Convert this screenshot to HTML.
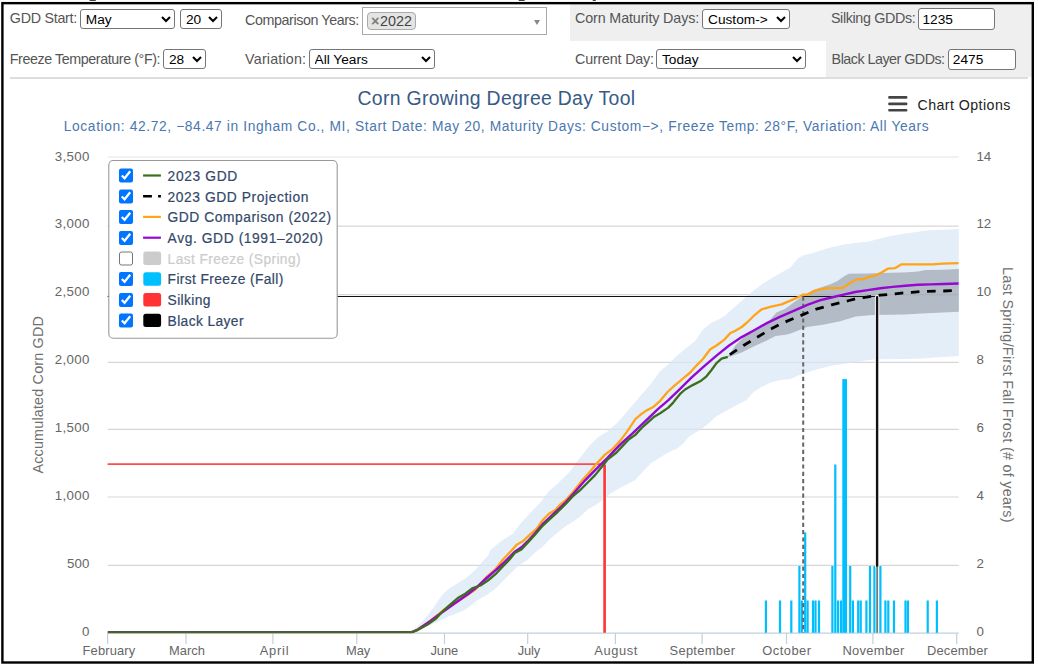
<!DOCTYPE html>
<html><head><meta charset="utf-8"><title>Corn Growing Degree Day Tool</title>
<style>
html,body{margin:0;padding:0;background:#fff;}
body{width:1038px;height:669px;position:relative;overflow:hidden;font-family:'Liberation Sans',sans-serif;}
.gp{position:absolute;background:#efefef;}
.lb{position:absolute;white-space:pre;font-size:14.3px;line-height:16px;color:#555;font-family:'Liberation Sans',sans-serif;}
select,input[type=text]{position:absolute;box-sizing:border-box;margin:0;font-family:'Liberation Sans',sans-serif;color:#000;background:#fff;}
select{font-size:13.7px;padding:0 0 0 1px;border:1px solid #767676;border-radius:3px;}
input[type=text]{font-size:13.7px;padding:1px 4px;border:1px solid #767676;border-radius:3px;}
.cb{position:absolute;left:118.6px;margin:0;width:14.6px;height:14.6px;}
#hr{position:absolute;left:10.4px;top:77.3px;width:1017.2px;height:1.5px;background:#ddd;}
#s2{position:absolute;left:362.3px;top:6.9px;width:184.4px;height:27.8px;box-sizing:border-box;border:1px solid #aaa;background:#fff;}
#tag{position:absolute;left:366.9px;top:12px;width:49.2px;height:18px;box-sizing:border-box;border:1px solid #aaa;border-radius:4px;background:#e4e4e4;font-size:14.4px;line-height:16.5px;color:#444;white-space:pre;padding-left:3.2px;}
#tag b{color:#7c7c7c;font-size:14.4px;font-weight:700;margin-right:0.6px;}
#arr{position:absolute;left:534.2px;top:20.2px;width:0;height:0;border-left:3.7px solid transparent;border-right:3.7px solid transparent;border-top:5.2px solid #888;}
svg{position:absolute;left:0;top:0;}
svg text{font-family:'Liberation Sans',sans-serif;}
</style></head>
<body>
<div class="gp" style="left:569.8px;top:4.3px;width:461.8px;height:36.7px"></div>
<div class="gp" style="left:826px;top:40.9px;width:205.6px;height:35.9px"></div>
<span class="lb" style="left:9.8px;top:10.0px;letter-spacing:-0.269px">GDD Start:</span>
<span class="lb" style="left:9.8px;top:50.5px;letter-spacing:-0.421px">Freeze Temperature (°F):</span>
<span class="lb" style="left:245.1px;top:11.9px;letter-spacing:-0.413px">Comparison Years:</span>
<span class="lb" style="left:245.1px;top:50.5px;letter-spacing:0.184px">Variation:</span>
<span class="lb" style="left:575.0px;top:10.0px;letter-spacing:-0.118px">Corn Maturity Days:</span>
<span class="lb" style="left:575.0px;top:50.5px;letter-spacing:-0.186px">Current Day:</span>
<span class="lb" style="left:830.9px;top:10.0px;letter-spacing:-0.349px">Silking GDDs:</span>
<span class="lb" style="left:831.6px;top:50.5px;letter-spacing:-0.504px">Black Layer GDDs:</span>
<select style="left:79.8px;top:9.2px;width:94.8px;height:19.8px"><option>May</option></select>
<select style="left:179.9px;top:9.2px;width:42.5px;height:19.8px"><option>20</option></select>
<select style="left:163px;top:49.2px;width:42.8px;height:19.9px"><option>28</option></select>
<select style="left:308.6px;top:49.2px;width:126px;height:20.2px"><option>All Years</option></select>
<div id="s2"></div><div id="tag"><b>&#215;</b>2022</div><div id="arr"></div>
<select style="left:702px;top:9.2px;width:87.9px;height:19.9px"><option>Custom-&gt;</option></select>
<select style="left:656px;top:49.2px;width:149.6px;height:20.2px"><option>Today</option></select>
<input type="text" value="1235" style="left:917.5px;top:8.3px;width:77.7px;height:21.7px">
<input type="text" value="2475" style="left:947.8px;top:48.6px;width:68px;height:21.4px">
<div id="hr"></div>
<svg width="1038" height="669" viewBox="0 0 1038 669">
<rect x="2.4" y="3.15" width="1030.4" height="659.35" fill="none" stroke="#000" stroke-width="2.4"/>
<rect x="89.4" y="-1" width="6.6" height="1.8" rx="0.8" fill="#000"/>
<rect x="518.5" y="-1" width="6.4" height="1.8" rx="0.8" fill="#000"/>
<rect x="592.5" y="-1" width="3.5" height="1.8" rx="0.8" fill="#000"/>
<path d="M107.6 565.3H958.7" stroke="#e3e3e3" stroke-width="1.2" fill="none"/>
<path d="M107.6 497.0H958.7" stroke="#e3e3e3" stroke-width="1.2" fill="none"/>
<path d="M107.6 429.3H958.7" stroke="#e3e3e3" stroke-width="1.2" fill="none"/>
<path d="M107.6 362.4H958.7" stroke="#e3e3e3" stroke-width="1.2" fill="none"/>
<path d="M107.6 294.6H958.7" stroke="#e3e3e3" stroke-width="1.2" fill="none"/>
<path d="M107.6 226.2H958.7" stroke="#e3e3e3" stroke-width="1.2" fill="none"/>
<path d="M107.6 157.0H958.7" stroke="#e3e3e3" stroke-width="1.2" fill="none"/>
<polygon points="411.3,632.3 423.8,620.1 432.6,608.8 442.7,594.3 449.0,588.7 457.8,583.0 467.8,576.7 475.4,569.8 482.9,561.0 487.9,556.0 490.5,550.1 502.6,540.1 512.6,533.8 521.4,522.5 530.2,513.1 540.3,502.4 549.0,491.1 557.8,483.5 565.4,476.0 570.0,471.4 580.1,457.6 590.1,445.0 597.6,437.5 607.7,431.2 617.7,422.4 625.3,413.6 632.8,404.8 640.4,396.0 650.0,385.0 660.0,371.3 667.5,365.0 675.1,357.5 685.1,348.7 695.2,341.1 702.7,329.8 710.3,323.5 718.5,319.6 725.3,315.5 732.6,308.8 742.6,300.0 752.7,291.2 762.7,283.7 772.8,277.4 782.8,271.8 790.4,267.4 797.9,258.6 802.9,255.4 813.0,252.9 823.0,249.8 831.5,247.3 842.6,244.8 855.1,243.0 867.7,241.7 880.3,238.6 892.8,235.4 905.4,233.5 917.9,231.7 925.5,230.4 943.1,229.8 958.8,229.1 958.8,355.9 938.0,357.2 921.5,358.4 905.1,358.9 875.5,359.2 864.0,360.8 847.5,363.3 831.1,365.8 814.7,369.9 799.9,374.8 790.0,379.2 780.6,380.1 770.6,382.6 760.5,387.6 753.0,392.6 746.7,400.0 736.0,405.4 726.0,411.0 715.9,416.7 708.0,424.0 700.4,430.0 695.6,432.4 689.3,436.2 683.1,443.7 676.8,448.8 668.0,452.5 657.9,458.8 650.4,463.8 642.9,471.4 635.3,480.0 620.0,487.9 610.6,493.6 603.1,499.9 595.5,504.9 588.0,509.3 580.5,516.2 572.9,521.9 565.4,526.3 557.8,532.5 550.3,538.8 542.8,546.4 535.2,552.6 526.6,560.5 518.1,566.1 511.8,572.3 503.0,581.1 495.5,588.7 486.7,594.9 477.9,600.0 471.6,605.0 465.3,609.4 459.0,612.5 449.0,616.3 436.4,622.6 423.8,627.6 411.3,632.3" fill="#e4eef9"/>
<polygon points="727.8,356.6 735.4,345.5 741.7,339.2 748.0,333.6 754.2,330.0 760.5,326.3 766.8,322.8 769.3,321.0 772.0,317.5 776.5,312.6 785.3,308.8 795.4,301.3 805.4,294.4 813.0,290.0 820.5,287.5 830.3,284.3 837.5,281.0 843.8,276.5 848.8,273.7 867.7,273.5 880.3,273.1 892.8,272.7 907.9,272.2 917.9,271.5 925.5,270.0 943.1,269.7 958.8,269.0 958.8,311.8 938.0,312.8 921.5,313.5 905.1,314.5 888.7,314.8 872.2,315.1 855.8,316.4 839.3,321.4 822.9,324.7 807.0,327.0 790.0,333.7 785.6,334.8 775.6,336.1 766.8,340.5 754.2,346.2 741.7,352.4 730.4,356.4 727.8,357.0" fill="#b3bbc6"/>
<path d="M107.6 565.3H958.7" stroke="#000" stroke-opacity="0.05" stroke-width="1.2" fill="none"/>
<path d="M107.6 497.0H958.7" stroke="#000" stroke-opacity="0.05" stroke-width="1.2" fill="none"/>
<path d="M107.6 429.3H958.7" stroke="#000" stroke-opacity="0.05" stroke-width="1.2" fill="none"/>
<path d="M107.6 362.4H958.7" stroke="#000" stroke-opacity="0.05" stroke-width="1.2" fill="none"/>
<path d="M107.6 294.6H958.7" stroke="#000" stroke-opacity="0.05" stroke-width="1.2" fill="none"/>
<path d="M107.6 226.2H958.7" stroke="#000" stroke-opacity="0.05" stroke-width="1.2" fill="none"/>
<path d="M107.6 633.1H958.7" stroke="#c0d0e0" stroke-width="1.2"/>
<path d="M107.6 633V644" stroke="#c0d0e0" stroke-width="1.2"/>
<path d="M186.0 633V644" stroke="#c0d0e0" stroke-width="1.2"/>
<path d="M272.9 633V644" stroke="#c0d0e0" stroke-width="1.2"/>
<path d="M356.8 633V644" stroke="#c0d0e0" stroke-width="1.2"/>
<path d="M444.5 633V644" stroke="#c0d0e0" stroke-width="1.2"/>
<path d="M527.7 633V644" stroke="#c0d0e0" stroke-width="1.2"/>
<path d="M615.4 633V644" stroke="#c0d0e0" stroke-width="1.2"/>
<path d="M702.1 633V644" stroke="#c0d0e0" stroke-width="1.2"/>
<path d="M786.5 633V644" stroke="#c0d0e0" stroke-width="1.2"/>
<path d="M872.9 633V644" stroke="#c0d0e0" stroke-width="1.2"/>
<path d="M956.7 633V644" stroke="#c0d0e0" stroke-width="1.2"/>
<rect x="764.8" y="600.5" width="2.2" height="32.3" fill="#00bfff"/>
<rect x="778.9" y="600.5" width="2.2" height="32.3" fill="#00bfff"/>
<rect x="790.2" y="600.5" width="2.2" height="32.3" fill="#00bfff"/>
<rect x="798.3" y="566.0" width="2.2" height="66.8" fill="#00bfff"/>
<rect x="800.7" y="600.5" width="2.2" height="32.3" fill="#00bfff"/>
<rect x="804.1" y="532.4" width="2.2" height="100.4" fill="#00bfff"/>
<rect x="806.5" y="600.5" width="2.2" height="32.3" fill="#00bfff"/>
<rect x="811.9" y="600.5" width="2.2" height="32.3" fill="#00bfff"/>
<rect x="814.4" y="600.5" width="2.2" height="32.3" fill="#00bfff"/>
<rect x="817.9" y="600.5" width="2.2" height="32.3" fill="#00bfff"/>
<rect x="831.3" y="566.0" width="2.2" height="66.8" fill="#00bfff"/>
<rect x="834.2" y="464.5" width="2.2" height="168.3" fill="#00bfff"/>
<rect x="836.9" y="600.5" width="2.2" height="32.3" fill="#00bfff"/>
<rect x="839.9" y="600.5" width="2.2" height="32.3" fill="#00bfff"/>
<rect x="849.1" y="566.0" width="2.2" height="66.8" fill="#00bfff"/>
<rect x="851.8" y="600.5" width="2.2" height="32.3" fill="#00bfff"/>
<rect x="857.1" y="600.5" width="2.2" height="32.3" fill="#00bfff"/>
<rect x="859.6" y="600.5" width="2.2" height="32.3" fill="#00bfff"/>
<rect x="865.3" y="600.5" width="2.2" height="32.3" fill="#00bfff"/>
<rect x="868.9" y="566.0" width="2.2" height="66.8" fill="#00bfff"/>
<rect x="873.3" y="566.0" width="2.2" height="66.8" fill="#00bfff"/>
<rect x="879.3" y="566.0" width="2.2" height="66.8" fill="#00bfff"/>
<rect x="884.3" y="600.5" width="2.2" height="32.3" fill="#00bfff"/>
<rect x="887.2" y="600.5" width="2.2" height="32.3" fill="#00bfff"/>
<rect x="892.9" y="600.5" width="2.2" height="32.3" fill="#00bfff"/>
<rect x="904.4" y="600.5" width="2.2" height="32.3" fill="#00bfff"/>
<rect x="906.8" y="600.5" width="2.2" height="32.3" fill="#00bfff"/>
<rect x="926.6" y="600.5" width="2.2" height="32.3" fill="#00bfff"/>
<rect x="935.8" y="600.5" width="2.2" height="32.3" fill="#00bfff"/>
<rect x="842.3" y="379.1" width="4.7" height="253.7" fill="#00bfff"/>
<path d="M107.6 464.2H604.6" stroke="#ff4a4a" stroke-width="1.7" fill="none"/>
<path d="M604.6 464.6V632.8" stroke="#fff" stroke-opacity="0.6" stroke-width="4.2" fill="none"/>
<path d="M604.6 464.6V632.8" stroke="#ff3838" stroke-width="2.7" fill="none"/>
<path d="M107.6 296.5H877.1" stroke="#111" stroke-width="1.15" fill="none"/>
<path d="M877.1 297.3V566" stroke="#fff" stroke-width="4.4" fill="none" stroke-linecap="round"/>
<path d="M877.1 297.1V566" stroke="#111" stroke-width="2.4" fill="none" stroke-linecap="round"/>
<path d="M877.1 566V632.8" stroke="#555" stroke-width="1.4" fill="none"/>
<path d="M803.2 296.5V632.8" stroke="#666" stroke-width="2" stroke-dasharray="4.2 3.1" fill="none"/>
<clipPath id="pc"><rect x="107.6" y="150" width="851.1" height="483.2"/></clipPath><g clip-path="url(#pc)">
<polyline points="107.6,632.3 411.3,632.3 418.0,629.3 430.1,621.0 443.9,609.8 455.3,603.1 467.8,594.8 475.4,589.6 486.7,576.8 495.5,569.2 502.6,560.0 510.1,552.0 516.4,545.1 522.7,541.3 530.2,534.4 536.5,528.8 542.8,520.0 549.0,513.7 555.3,509.9 560.4,504.3 565.4,500.5 572.9,492.3 581.2,481.6 590.1,471.4 597.6,462.6 605.2,454.4 612.7,448.8 620.3,440.6 626.5,432.4 631.6,424.9 635.3,419.2 640.4,414.8 646.6,410.4 652.9,407.3 660.2,400.8 667.5,392.0 675.1,385.1 682.6,378.8 690.2,372.5 696.4,365.6 702.7,359.3 710.3,349.3 716.5,345.5 724.1,339.9 730.4,333.0 735.8,330.6 741.7,327.0 746.5,323.0 753.4,316.2 761.5,309.4 770.3,306.9 781.6,304.4 790.4,300.6 800.4,296.3 802.9,294.7 807.9,294.4 815.5,290.6 820.5,289.3 828.0,288.1 835.6,288.1 842.8,288.1 848.8,283.8 856.4,279.4 862.7,279.4 868.9,276.9 875.2,275.6 881.5,272.5 887.8,268.7 895.3,268.1 901.6,264.3 917.9,264.3 933.0,264.3 943.1,263.7 958.8,263.1" stroke="#ffa319" stroke-width="2.3" fill="none" stroke-linejoin="round"/>
<polyline points="107.6,632.3 411.3,632.3 418.0,629.5 430.1,621.3 442.7,611.9 455.3,603.1 467.8,594.3 477.9,586.2 486.7,578.0 495.5,570.4 503.0,563.5 510.5,556.0 515.1,551.4 521.4,547.3 527.7,541.2 535.2,533.0 542.8,524.0 550.3,517.0 557.8,510.0 565.4,502.6 572.9,494.3 580.5,485.5 585.1,480.3 595.1,470.1 607.7,457.6 620.3,444.4 632.8,433.1 645.4,421.1 657.9,409.2 668.4,400.2 678.8,390.1 691.4,377.6 704.0,366.3 716.5,355.6 729.1,345.5 741.7,337.1 754.2,330.2 766.8,323.1 779.3,317.2 795.4,310.1 807.9,304.6 820.5,300.2 831.5,297.5 842.6,294.8 855.1,292.0 867.7,290.1 880.3,288.2 892.8,286.9 905.4,285.7 917.9,284.8 930.5,284.4 943.1,284.0 958.8,283.5" stroke="#9608d0" stroke-width="2.4" fill="none" stroke-linejoin="round"/>
<polyline points="107.6,632.3 411.3,632.3 417.6,630.1 427.6,624.5 436.4,618.2 442.7,611.3 449.0,605.6 457.8,598.1 465.3,593.7 472.8,588.0 480.4,585.5 487.9,580.5 495.5,574.2 503.0,566.1 509.3,559.8 515.1,552.6 521.4,549.5 527.7,542.6 535.2,534.4 542.8,525.6 550.3,518.7 557.8,511.8 565.4,504.3 572.9,496.1 580.5,489.8 588.0,482.3 595.1,475.1 602.7,465.7 607.7,459.4 616.5,452.5 624.0,444.4 629.0,439.3 635.3,434.9 641.6,428.0 647.9,422.4 654.2,416.7 660.5,413.0 668.0,407.9 673.0,402.9 675.1,400.0 680.1,393.9 685.1,389.5 692.7,385.1 700.2,381.3 706.5,376.3 711.5,370.0 716.5,363.1 721.6,358.7 727.8,356.8" stroke="#3d6e1e" stroke-width="2.3" fill="none" stroke-linejoin="round"/>
<polyline points="729.8,354.7 743.5,345.5 758.0,336.7 771.8,328.6 779.0,324.7 786.6,321.4 794.1,318.2 801.7,315.1 809.2,312.0 816.1,309.2 824.3,306.9 831.6,304.8 838.4,303.2 847.3,301.0 855.1,298.9 863.3,297.6 871.5,296.4 880.3,295.1 887.8,294.5 895.3,293.8 903.5,292.8 911.7,292.3 919.8,291.7 927.4,291.3 935.5,291.1 943.7,291.0 951.9,290.7 958.8,290.5" stroke="#000" stroke-width="2.8" fill="none" stroke-dasharray="8.6 7.6" stroke-linejoin="round"/>
</g>
<text x="89.4" y="635.8" font-size="13.3" fill="#666" text-anchor="end">0</text>
<text x="89.4" y="567.9" font-size="13.3" fill="#666" text-anchor="end" textLength="22.5" lengthAdjust="spacing">500</text>
<text x="89.4" y="500.0" font-size="13.3" fill="#666" text-anchor="end" textLength="34.7" lengthAdjust="spacing">1,000</text>
<text x="89.4" y="432.1" font-size="13.3" fill="#666" text-anchor="end" textLength="34.7" lengthAdjust="spacing">1,500</text>
<text x="89.4" y="364.2" font-size="13.3" fill="#666" text-anchor="end" textLength="34.7" lengthAdjust="spacing">2,000</text>
<text x="89.4" y="296.3" font-size="13.3" fill="#666" text-anchor="end" textLength="34.7" lengthAdjust="spacing">2,500</text>
<text x="89.4" y="228.4" font-size="13.3" fill="#666" text-anchor="end" textLength="34.7" lengthAdjust="spacing">3,000</text>
<text x="89.4" y="160.5" font-size="13.3" fill="#666" text-anchor="end" textLength="34.7" lengthAdjust="spacing">3,500</text>
<text x="976.4" y="635.8" font-size="13.3" fill="#666" text-anchor="start">0</text>
<text x="976.4" y="567.9" font-size="13.3" fill="#666" text-anchor="start">2</text>
<text x="976.4" y="500.0" font-size="13.3" fill="#666" text-anchor="start">4</text>
<text x="976.4" y="432.1" font-size="13.3" fill="#666" text-anchor="start">6</text>
<text x="976.4" y="364.2" font-size="13.3" fill="#666" text-anchor="start">8</text>
<text x="976.4" y="296.3" font-size="13.3" fill="#666" text-anchor="start">10</text>
<text x="976.4" y="228.4" font-size="13.3" fill="#666" text-anchor="start">12</text>
<text x="976.4" y="160.5" font-size="13.3" fill="#666" text-anchor="start">14</text>
<text x="108.9" y="654.6" font-size="12.9" fill="#666" text-anchor="middle" textLength="52.7" lengthAdjust="spacing">February</text>
<text x="186.9" y="654.6" font-size="12.9" fill="#666" text-anchor="middle" textLength="35.8" lengthAdjust="spacing">March</text>
<text x="274.1" y="654.6" font-size="12.9" fill="#666" text-anchor="middle" textLength="28.8" lengthAdjust="spacing">April</text>
<text x="358.2" y="654.6" font-size="12.9" fill="#666" text-anchor="middle" textLength="24.2" lengthAdjust="spacing">May</text>
<text x="444.3" y="654.6" font-size="12.9" fill="#666" text-anchor="middle" textLength="27.6" lengthAdjust="spacing">June</text>
<text x="529" y="654.6" font-size="12.9" fill="#666" text-anchor="middle" textLength="22.5" lengthAdjust="spacing">July</text>
<text x="615.8" y="654.6" font-size="12.9" fill="#666" text-anchor="middle" textLength="43.3" lengthAdjust="spacing">August</text>
<text x="702.3" y="654.6" font-size="12.9" fill="#666" text-anchor="middle" textLength="65.7" lengthAdjust="spacing">September</text>
<text x="786.6" y="654.6" font-size="12.9" fill="#666" text-anchor="middle" textLength="48.9" lengthAdjust="spacing">October</text>
<text x="873.3" y="654.6" font-size="12.9" fill="#666" text-anchor="middle" textLength="61.8" lengthAdjust="spacing">November</text>
<text x="957.4" y="654.6" font-size="12.9" fill="#666" text-anchor="middle" textLength="60.8" lengthAdjust="spacing">December</text>
<text transform="translate(43.0,394.8) rotate(-90)" font-size="14.4" fill="#707070" text-anchor="middle" textLength="157.5" lengthAdjust="spacing">Accumulated Corn GDD</text>
<text transform="translate(1003.0,394.8) rotate(90)" font-size="14.4" fill="#707070" text-anchor="middle" textLength="255.5" lengthAdjust="spacing">Last Spring/First Fall Frost (# of years)</text>
<text x="496.3" y="104.7" font-size="19.4" fill="#375a86" text-anchor="middle" textLength="277.5" lengthAdjust="spacing">Corn Growing Degree Day Tool</text>
<text x="496.2" y="130.6" font-size="13.8" fill="#4a78b0" text-anchor="middle" textLength="864.8" lengthAdjust="spacing">Location: 42.72, −84.47 in Ingham Co., MI, Start Date: May 20, Maturity Days: Custom−&gt;, Freeze Temp: 28°F, Variation: All Years</text>
<rect x="888.2" y="96.1" width="19.2" height="2.6" rx="1" fill="#444"/>
<rect x="888.2" y="102.6" width="19.2" height="2.6" rx="1" fill="#444"/>
<rect x="888.2" y="108.9" width="19.2" height="2.6" rx="1" fill="#444"/>
<text x="917.5" y="110.4" font-size="14.2" fill="#222" text-anchor="start" textLength="92.8" lengthAdjust="spacing">Chart Options</text>
<rect x="108.8" y="160.5" width="228.4" height="177.8" rx="4.5" fill="#fff" stroke="#999" stroke-width="1.1"/>
<text x="167.6" y="180.8" font-size="13.8" fill="#33486a" text-anchor="start" textLength="69.7" lengthAdjust="spacing" stroke="#33486a" stroke-width="0.2">2023 GDD</text>
<text x="167.6" y="201.5" font-size="13.8" fill="#33486a" text-anchor="start" textLength="140.8" lengthAdjust="spacing" stroke="#33486a" stroke-width="0.2">2023 GDD Projection</text>
<text x="167.6" y="222.2" font-size="13.8" fill="#33486a" text-anchor="start" textLength="163.4" lengthAdjust="spacing" stroke="#33486a" stroke-width="0.2">GDD Comparison (2022)</text>
<text x="167.6" y="243.0" font-size="13.8" fill="#33486a" text-anchor="start" textLength="155.3" lengthAdjust="spacing" stroke="#33486a" stroke-width="0.2">Avg. GDD (1991–2020)</text>
<text x="167.6" y="263.7" font-size="13.8" fill="#ccc" text-anchor="start" stroke="#ccc" stroke-width="0.2" letter-spacing="0.38">Last Freeze (Spring)</text>
<text x="167.6" y="284.4" font-size="13.8" fill="#33486a" text-anchor="start" stroke="#33486a" stroke-width="0.2" letter-spacing="0.38">First Freeze (Fall)</text>
<text x="167.6" y="305.1" font-size="13.8" fill="#33486a" text-anchor="start" stroke="#33486a" stroke-width="0.2" letter-spacing="0.38">Silking</text>
<text x="167.6" y="325.8" font-size="13.8" fill="#33486a" text-anchor="start" stroke="#33486a" stroke-width="0.2" letter-spacing="0.38">Black Layer</text>
<path d="M143.1 175.5H160.9" stroke="#3d6e1e" stroke-width="2.2"/>
<path d="M143.1 196.2H151.9M158.1 196.2H160.9" stroke="#000" stroke-width="2.4"/>
<path d="M143.1 216.9H160.9" stroke="#ffa319" stroke-width="2.2"/>
<path d="M143.1 237.7H160.9" stroke="#9608d0" stroke-width="2.2"/>
<rect x="143.3" y="251.6" width="17.8" height="13.4" rx="2.5" fill="#ccc"/>
<rect x="143.3" y="272.3" width="17.8" height="13.4" rx="2.5" fill="#00bfff"/>
<rect x="143.3" y="293.0" width="17.8" height="13.4" rx="2.5" fill="#ff3333"/>
<rect x="143.3" y="313.7" width="17.8" height="13.4" rx="2.5" fill="#000"/>
</svg>
<input type="checkbox" checked class="cb" style="top:168.3px">
<input type="checkbox" checked class="cb" style="top:189.0px">
<input type="checkbox" checked class="cb" style="top:209.7px">
<input type="checkbox" checked class="cb" style="top:230.5px">
<input type="checkbox" class="cb" style="top:251.2px">
<input type="checkbox" checked class="cb" style="top:271.9px">
<input type="checkbox" checked class="cb" style="top:292.6px">
<input type="checkbox" checked class="cb" style="top:313.3px">
</body></html>
